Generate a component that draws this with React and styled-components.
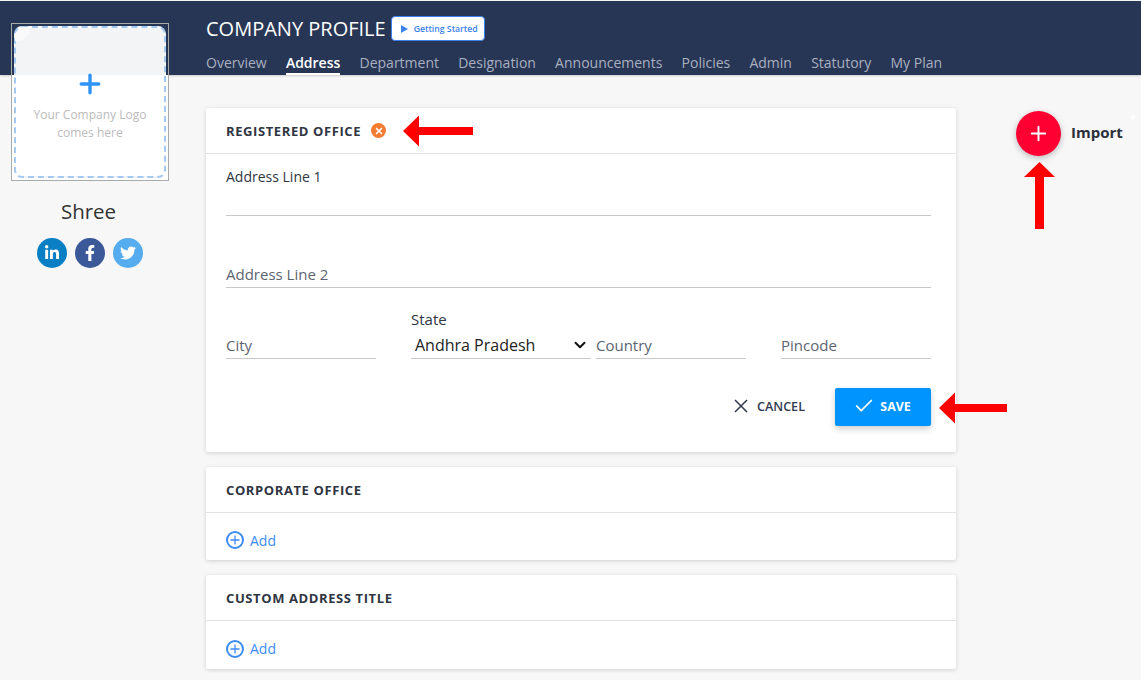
import React from "react";
import styled, { createGlobalStyle } from "styled-components";
import { FaLinkedinIn, FaFacebookF, FaTwitter } from "react-icons/fa";
import { Check, ChevronDown, Plus, X } from "lucide-react";

const GlobalStyle = createGlobalStyle`
  html, body {
    margin: 0;
    padding: 0;
    background: #f7f7f7;
    font-family: "Open Sans", "Liberation Sans", sans-serif;
    color: #2f3542;
  }
  * { box-sizing: border-box; }
`;

const Page = styled.div`
  position: relative;
  width: 1141px;
  height: 680px;
  overflow: hidden;
`;

const Header = styled.header`
  height: 74px;
  margin-top: 1px;
  padding: 15px 0 0 206px;
  background: #283655;
  box-shadow: 0 1px 2px rgba(0, 0, 0, 0.18);
`;

const TitleRow = styled.div`
  display: flex;
  align-items: center;
  gap: 5px;
  height: 25px;
`;

const Title = styled.h1`
  margin: 0;
  font-size: 20px;
  font-weight: 400;
  color: #fff;
  white-space: nowrap;
`;

const StartedButton = styled.button`
  display: flex;
  align-items: center;
  gap: 5px;
  width: 94px;
  height: 25px;
  padding: 0 0 0 8px;
  background: #fff;
  border: 1px solid #3b82f0;
  border-radius: 4px;
  color: #3b82f0;
  font-family: inherit;
  font-size: 8.7px;
  font-weight: 600;
  white-space: nowrap;
`;

const Tabs = styled.nav`
  display: flex;
  gap: 19.2px;
  margin-top: 12px;
`;

const Tab = styled.a`
  height: 22px;
  font-size: 14px;
  line-height: 19px;
  font-weight: ${(p) => (p.$active ? 600 : 400)};
  color: ${(p) => (p.$active ? "#fff" : "#a9b0c0")};
  border-bottom: ${(p) => (p.$active ? "2px solid #fff" : "none")};
  white-space: nowrap;
`;

const Body = styled.div`
  display: grid;
  grid-template-columns: 206px 750px 1fr;
`;

const Sidebar = styled.aside`
  display: flex;
  flex-direction: column;
  align-items: center;
  width: 180px;
  margin-top: -52px;
  position: relative;
`;

const LogoFrame = styled.div`
  position: relative;
  width: 158px;
  height: 158px;
  padding: 2px;
  border: 1px solid #aaa;
  background: linear-gradient(#283655 0 51px, #fff 51px);
  &::before {
    content: "";
    position: absolute;
    left: 3px;
    top: 3px;
    width: 14px;
    height: 14px;
    background: linear-gradient(135deg, transparent 25%, #fafafa 25% 75%, transparent 75%);
  }
`;

const LogoDrop = styled.div`
  display: flex;
  flex-direction: column;
  align-items: center;
  height: 100%;
  padding-top: 41px;
  border: 2px dashed #a3c9f1;
  border-radius: 8px;
  background: linear-gradient(#f3f4f6 0 47px, #fff 47px);
`;

const LogoHint = styled.p`
  margin: 7px 0 0;
  font-size: 12px;
  line-height: 18px;
  text-align: center;
  color: #bbb;
`;

const CompanyName = styled.div`
  margin-top: 17px;
  padding-right: 3px;
  font-size: 20.5px;
  line-height: 26px;
  color: #333;
`;

const Socials = styled.div`
  display: flex;
  gap: 8px;
  margin-top: 14px;
`;

const SocialIcon = styled.span`
  display: flex;
  align-items: center;
  justify-content: center;
  width: 30px;
  height: 30px;
  border-radius: 50%;
  background: ${(p) => p.$color};
  color: #fff;
  font-size: 16px;
`;

const Main = styled.main`
  display: flex;
  flex-direction: column;
  gap: 15px;
  padding-top: 33px;
`;

const Card = styled.section`
  background: #fff;
  box-shadow: 0 1px 4px rgba(0, 0, 0, 0.16);
  border-radius: 2px;
`;

const CardHeader = styled.div`
  display: flex;
  align-items: center;
  gap: 10px;
  height: 46px;
  padding-left: 20px;
  border-bottom: 1px solid #e2e2e2;
`;

const CardTitle = styled.h2`
  margin: 0;
  font-size: 13px;
  font-weight: 700;
  letter-spacing: 0.6px;
  color: #2f3542;
`;

const CloseBadge = styled.span`
  display: flex;
  align-items: center;
  justify-content: center;
  width: 15px;
  height: 15px;
  border-radius: 50%;
  background: #f47b30;
  color: #fff;
`;

const Form = styled.form`
  display: flex;
  flex-direction: column;
  padding: 13px 25px 26px 20px;
`;

const FieldLabel = styled.label`
  display: block;
  margin-bottom: ${(p) => p.$gap || 0}px;
  font-size: ${(p) => p.$size || 14}px;
  line-height: 19px;
  font-weight: 500;
  color: #2f3542;
`;

const TextInput = styled.input`
  display: block;
  width: 100%;
  height: 28px;
  padding: 0;
  border: none;
  border-bottom: 1px solid #c8c8c8;
  outline: none;
  background: transparent;
  font-family: inherit;
  font-size: 15px;
  color: #333;
  &::placeholder {
    color: #5c6470;
    opacity: 1;
  }
`;

const FirstField = styled.div`
  height: 93px;
`;

const AddressRow = styled.div`
  display: grid;
  grid-template-columns: 150px 35px 180px 5px 150px 35px 150px;
  align-items: end;
  margin-top: 22px;
`;

const FieldSpacer = styled.span``;

const SelectWrap = styled.div`
  position: relative;
  margin-top: 2px;
  svg {
    position: absolute;
    right: 2px;
    top: 5px;
    color: #111;
    pointer-events: none;
  }
`;

const StateSelect = styled.select`
  display: block;
  width: 100%;
  height: 28px;
  padding: 0 0 0 4px;
  border: none;
  border-bottom: 1px solid #c8c8c8;
  outline: none;
  appearance: none;
  background: transparent;
  font-family: inherit;
  font-size: 16px;
  color: #222;
`;

const Actions = styled.div`
  display: flex;
  justify-content: flex-end;
  align-items: center;
  gap: 30px;
  margin-top: 29px;
`;

const CancelButton = styled.button`
  display: flex;
  align-items: center;
  gap: 9px;
  padding: 0 0 2px;
  border: none;
  background: none;
  font-family: inherit;
  font-size: 12.6px;
  font-weight: 600;
  color: #2f3a50;
`;

const SaveButton = styled.button`
  display: flex;
  align-items: center;
  justify-content: center;
  gap: 5px;
  width: 96px;
  height: 38px;
  padding: 0 2px 2px 0;
  border: none;
  border-radius: 2px;
  background: #0094ff;
  box-shadow: 0 3px 6px rgba(0, 0, 0, 0.2);
  color: #fff;
  font-family: inherit;
  font-size: 12.4px;
  font-weight: 700;
`;

const AddRow = styled.div`
  display: flex;
  align-items: center;
  gap: 6px;
  height: 47.4px;
  padding: 7px 0 0 20px;
  font-size: 14px;
  color: #3b8cf5;
`;

const AddIcon = styled.span`
  display: flex;
  align-items: center;
  justify-content: center;
  width: 18px;
  height: 18px;
  border: 2px solid #3b8cf5;
  border-radius: 50%;
`;

const ImportArea = styled.div`
  display: flex;
  align-items: center;
  gap: 10px;
  height: 45px;
  margin: 36px 0 0 60px;
`;

const ImportButton = styled.button`
  display: flex;
  align-items: center;
  justify-content: center;
  flex: none;
  width: 45px;
  height: 45px;
  padding: 0;
  border: none;
  border-radius: 50%;
  background: #ff0033;
  box-shadow: 0 2px 6px rgba(0, 0, 0, 0.25);
  color: #fff;
`;

const ImportLabel = styled.span`
  margin-bottom: 3px;
  font-size: 15px;
  font-weight: 700;
  color: #2b2f3a;
`;

const StrayPlus = styled.span`
  position: absolute;
  left: 1128px;
  top: 112px;
  color: #fff;
  line-height: 0;
`;

const Arrow = styled.svg`
  position: absolute;
  left: ${(p) => p.$x}px;
  top: ${(p) => p.$y}px;
`;

const tabs = [
  "Overview",
  "Address",
  "Department",
  "Designation",
  "Announcements",
  "Policies",
  "Admin",
  "Statutory",
  "My Plan",
];

const LeftArrow = ({ x, y, length }) => (
  <Arrow $x={x} $y={y} width={length} height="36" viewBox={`0 0 ${length} 36`}>
    <path
      d={`M0 18 L16 2.5 L16 14 L${length} 14 L${length} 22 L16 22 L16 33.5 Z`}
      fill="#ff0000"
    />
  </Arrow>
);

const AddLink = () => (
  <AddRow>
    <AddIcon>
      <Plus size={14} strokeWidth={2.2} />
    </AddIcon>
    Add
  </AddRow>
);

const App = () => {
  return (
    <Page>
      <GlobalStyle />
      <Header>
        <TitleRow>
          <Title>COMPANY PROFILE</Title>
          <StartedButton type="button">
            <svg width="9" height="10" viewBox="0 0 9 10">
              <path d="M1 1 L8 5 L1 9 Z" fill="#3b82f0" />
            </svg>
            Getting Started
          </StartedButton>
        </TitleRow>
        <Tabs>
          {tabs.map((t) => (
            <Tab key={t} $active={t === "Address"}>
              {t}
            </Tab>
          ))}
        </Tabs>
      </Header>
      <Body>
        <Sidebar>
          <LogoFrame>
            <LogoDrop>
              <Plus size={30} color="#2e93f5" strokeWidth={2.7} />
              <LogoHint>
                Your Company Logo
                <br />
                comes here
              </LogoHint>
            </LogoDrop>
          </LogoFrame>
          <CompanyName>Shree</CompanyName>
          <Socials>
            <SocialIcon $color="#0a7fc4">
              <FaLinkedinIn />
            </SocialIcon>
            <SocialIcon $color="#3b5998">
              <FaFacebookF />
            </SocialIcon>
            <SocialIcon $color="#55acee">
              <FaTwitter />
            </SocialIcon>
          </Socials>
        </Sidebar>
        <Main>
          <Card>
            <CardHeader>
              <CardTitle>REGISTERED OFFICE</CardTitle>
              <CloseBadge>
                <X size={10} strokeWidth={4} />
              </CloseBadge>
            </CardHeader>
            <Form>
              <FirstField>
                <FieldLabel $gap={2}>Address Line 1</FieldLabel>
                <TextInput />
              </FirstField>
              <TextInput placeholder="Address Line 2" />
              <AddressRow>
                <TextInput placeholder="City" />
                <FieldSpacer />
                <div>
                  <FieldLabel $size={15}>State</FieldLabel>
                  <SelectWrap>
                    <StateSelect defaultValue="Andhra Pradesh">
                      <option>Andhra Pradesh</option>
                    </StateSelect>
                    <ChevronDown size={18} strokeWidth={2.6} />
                  </SelectWrap>
                </div>
                <FieldSpacer />
                <TextInput placeholder="Country" />
                <FieldSpacer />
                <TextInput placeholder="Pincode" />
              </AddressRow>
              <Actions>
                <CancelButton type="button">
                  <svg width="14" height="14" viewBox="0 0 14 14">
                    <path d="M1 1 L13 13 M13 1 L1 13" stroke="#2f3a50" strokeWidth="1.5" fill="none" />
                  </svg>
                  CANCEL
                </CancelButton>
                <SaveButton type="button">
                  <Check size={22} strokeWidth={1.9} />
                  SAVE
                </SaveButton>
              </Actions>
            </Form>
          </Card>
          <Card>
            <CardHeader>
              <CardTitle>CORPORATE OFFICE</CardTitle>
            </CardHeader>
            <AddLink />
          </Card>
          <Card>
            <CardHeader>
              <CardTitle>CUSTOM ADDRESS TITLE</CardTitle>
            </CardHeader>
            <AddLink />
          </Card>
        </Main>
        <ImportArea>
          <ImportButton type="button">
            <Plus size={23} strokeWidth={2} />
          </ImportButton>
          <ImportLabel>Import</ImportLabel>
        </ImportArea>
      </Body>
      <StrayPlus>
        <Plus size={10} strokeWidth={2.5} />
      </StrayPlus>
      <LeftArrow x={403} y={113} length={70} />
      <LeftArrow x={939} y={390} length={68} />
      <Arrow $x={1023} $y={162} width="34" height="68" viewBox="0 0 34 68">
        <path d="M16.5 0 L32 15 L21 15 L21 67 L12 67 L12 15 L1 15 Z" fill="#ff0000" />
      </Arrow>
    </Page>
  );
};

export default App;
